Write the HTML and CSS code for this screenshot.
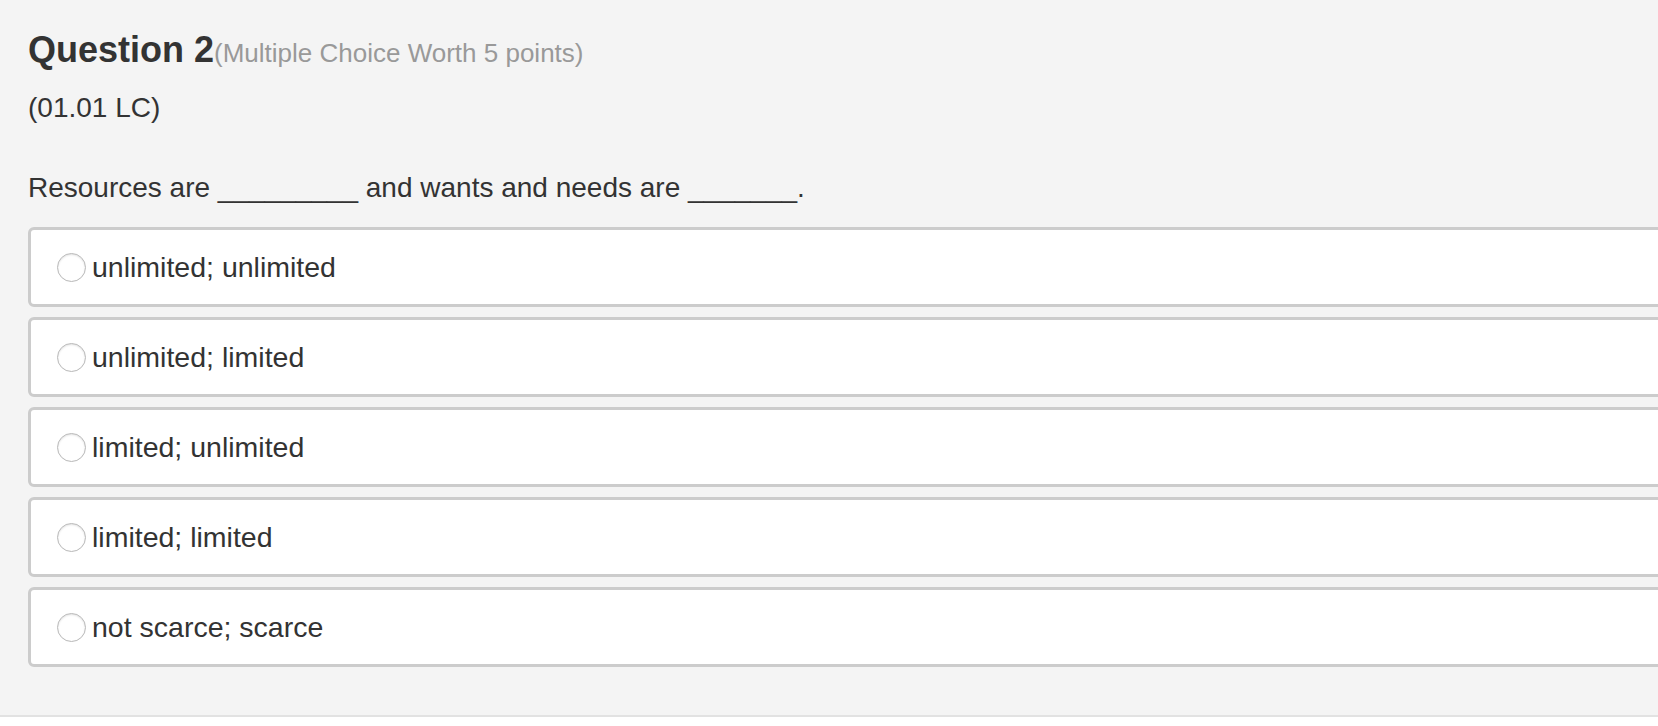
FILE: index.html
```html
<!DOCTYPE html>
<html lang="en">
<head>
<meta charset="utf-8">
<title>Question 2</title>
<link rel="stylesheet" href="styles.css">
</head>
<body>
<div class="page">
  <div class="question">
    <h2 class="q-title"><span class="q-num">Question 2</span><span class="q-meta">(Multiple Choice Worth 5 points)</span></h2>
    <p class="q-code">(01.01 LC)</p>
    <p class="q-text">Resources are _________ and wants and needs are _______.</p>
    <ul class="options">
      <li class="option"><span class="radio"></span><span class="label">unlimited; unlimited</span></li>
      <li class="option"><span class="radio"></span><span class="label">unlimited; limited</span></li>
      <li class="option"><span class="radio"></span><span class="label">limited; unlimited</span></li>
      <li class="option"><span class="radio"></span><span class="label">limited; limited</span></li>
      <li class="option"><span class="radio"></span><span class="label">not scarce; scarce</span></li>
    </ul>
  </div>
  <div class="footer-line"></div>
</div>
</body>
</html>
```

FILE: styles.css
```css
html, body {
  margin: 0;
  padding: 0;
  background: #ffffff;
  font-family: "Liberation Sans", Arial, Helvetica, sans-serif;
  color: #333333;
}

.page {
  overflow: hidden;
}

.question {
  background: #f4f4f4;
  padding: 28px 0 48px 28px;
  border-bottom: 2px solid #e2e2e2;
}

.q-title {
  margin: 0;
  line-height: 44px;
  font-weight: normal;
}

.q-num {
  font-size: 36px;
  font-weight: bold;
  color: #333333;
}

.q-meta {
  font-size: 26px;
  color: #999999;
}

.q-code {
  margin: 15px 0 0 0;
  font-size: 28px;
  line-height: 34px;
}

.q-text {
  margin: 46px 0 0 0;
  font-size: 28px;
  line-height: 34px;
}

.options {
  list-style: none;
  margin: 22px -60px 0 0;
  padding: 0;
  display: flex;
  flex-direction: column;
  gap: 10px;
}

.option {
  height: 74px;
  border: 3px solid #cccccc;
  border-radius: 6px;
  background: #ffffff;
  display: flex;
  align-items: center;
  padding-left: 26px;
  gap: 6px;
}

.radio {
  width: 27px;
  height: 27px;
  border-radius: 50%;
  border: 1px solid #b8b8b8;
  background: #ffffff;
  box-shadow: inset 0 1px 2px rgba(0, 0, 0, 0.12);
  flex: none;
}

.label {
  font-size: 28.5px;
  line-height: 34px;
  color: #333333;
}

.footer-line {
  height: 10px;
  background: #ffffff;
}
```
